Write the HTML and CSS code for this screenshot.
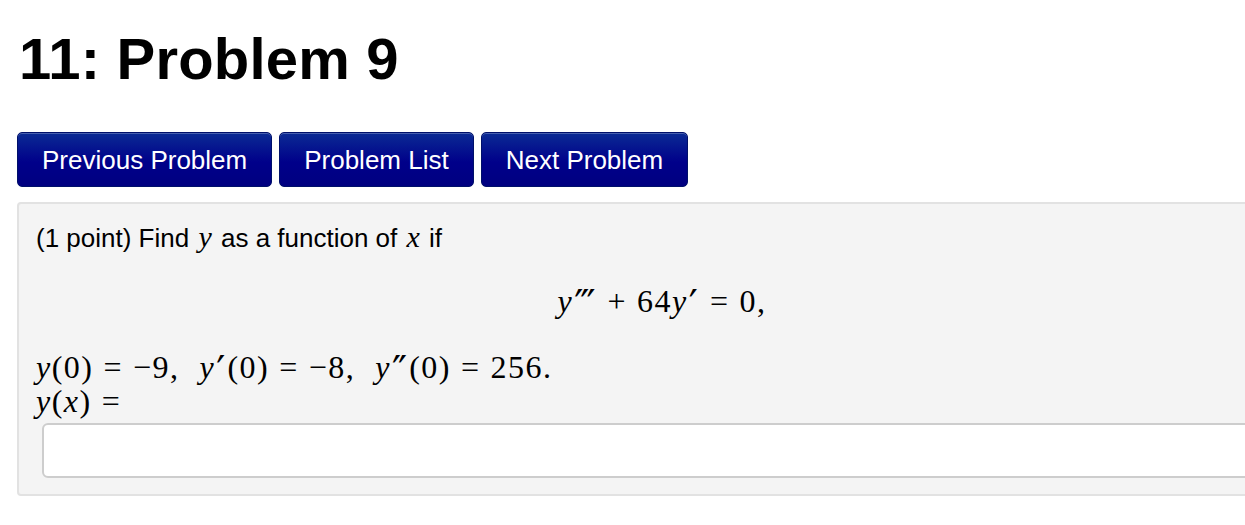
FILE: index.html
```html
<!DOCTYPE html>
<html lang="en">
<head>
    <meta charset="UTF-8">
    <title>11: Problem 9</title>
    <link rel="stylesheet" href="styles.css">
</head>
<body>

    <h1 class="page-title">11: Problem 9</h1>

    <!-- NAV BUTTONS -->
    <nav class="nav-buttons">
        <a href="#" class="nav-btn">Previous Problem</a>
        <a href="#" class="nav-btn">Problem List</a>
        <a href="#" class="nav-btn">Next Problem</a>
    </nav>

    <!-- PROBLEM BODY -->
    <div class="problem">
        <p class="statement">(1 point) Find <span class="mi">y</span> as a function of <span class="mi">x</span> if</p>

        <div class="display">
            <span class="mi">y</span><span class="prime">&#8242;&#8242;&#8242;</span><span class="op">+</span>64<span class="mi">y</span><span class="prime">&#8242;</span><span class="op">=</span>0,
        </div>

        <div class="math-line">
            <span class="mi">y</span>(0)<span class="op">=</span>&minus;9,<span class="gap"></span><span class="mi">y</span><span class="prime">&#8242;</span>(0)<span class="op">=</span>&minus;8,<span class="gap"></span><span class="mi">y</span><span class="prime">&#8242;&#8242;</span>(0)<span class="op">=</span>256.
        </div>
        <div class="math-line">
            <span class="mi">y</span>(<span class="mi">x</span>)<span class="op">=</span>
        </div>

        <input type="text" class="answer">
    </div>

</body>
</html>
```

FILE: styles.css
```css
/* --- General --- */
html {
    overflow: hidden;
}

body {
    margin: 0;
    padding: 0 0 0 17px;
    font-family: "Liberation Sans", Arial, sans-serif;
    color: #000;
    background: #fff;
}

.page-title {
    font-size: 58px;
    font-weight: bold;
    margin: 0;
    padding: 26px 0 0 2px;
    line-height: 66px;
    letter-spacing: 0.2px;
}

/* --- Nav buttons --- */
.nav-buttons {
    display: flex;
    gap: 7px;
    margin-top: 40px;
}

.nav-btn {
    display: block;
    height: 55px;
    line-height: 55px;
    padding: 0 24px;
    box-sizing: border-box;
    font-size: 26px;
    color: #fff;
    text-decoration: none;
    border-radius: 5px;
    border: 1px solid #00106a;
    background: linear-gradient(#0b2b94, #00008a 55%, #000080);
    box-shadow: inset 0 1px 0 rgba(255,255,255,0.25);
}

/* --- Problem box --- */
.problem {
    width: 1290px;
    box-sizing: border-box;
    margin-top: 15px;
    padding: 18px 17px 16px 17px;
    background: #f4f4f4;
    border: 2px solid #e2e2e2;
    border-radius: 4px;
}

.statement {
    margin: 0;
    font-size: 26px;
    line-height: 30px;
}

/* math bits, set in a serif to stand in for the TeX font */
.mi {
    font-family: "Liberation Serif", "DejaVu Serif", serif;
    font-style: italic;
    font-size: 32px;
}

.statement .mi {
    font-size: 30px;
    margin: 0 2px;
}

.display,
.math-line {
    font-family: "Liberation Serif", "DejaVu Serif", serif;
    font-size: 32px;
    letter-spacing: 1.5px;
}

.display {
    text-align: center;
    margin: 28px 0 29px 0;
    line-height: 40px;
    height: 40px;
}

.math-line {
    line-height: 34px;
    height: 34px;
}

.prime {
    display: inline-block;
    font-family: "DejaVu Sans", sans-serif;
    font-size: 40px;
    line-height: 0;
    letter-spacing: -3px;
    vertical-align: -7px;
    margin: 0 5px 0 1px;
}

.op {
    margin: 0 10px;
}

.gap {
    display: inline-block;
    width: 20px;
}

.answer {
    display: block;
    width: 1230px;
    height: 55px;
    box-sizing: border-box;
    margin: 5px 0 0 6px;
    border: 2px solid #cdcdcd;
    border-radius: 6px;
    background: #fff;
}
```
